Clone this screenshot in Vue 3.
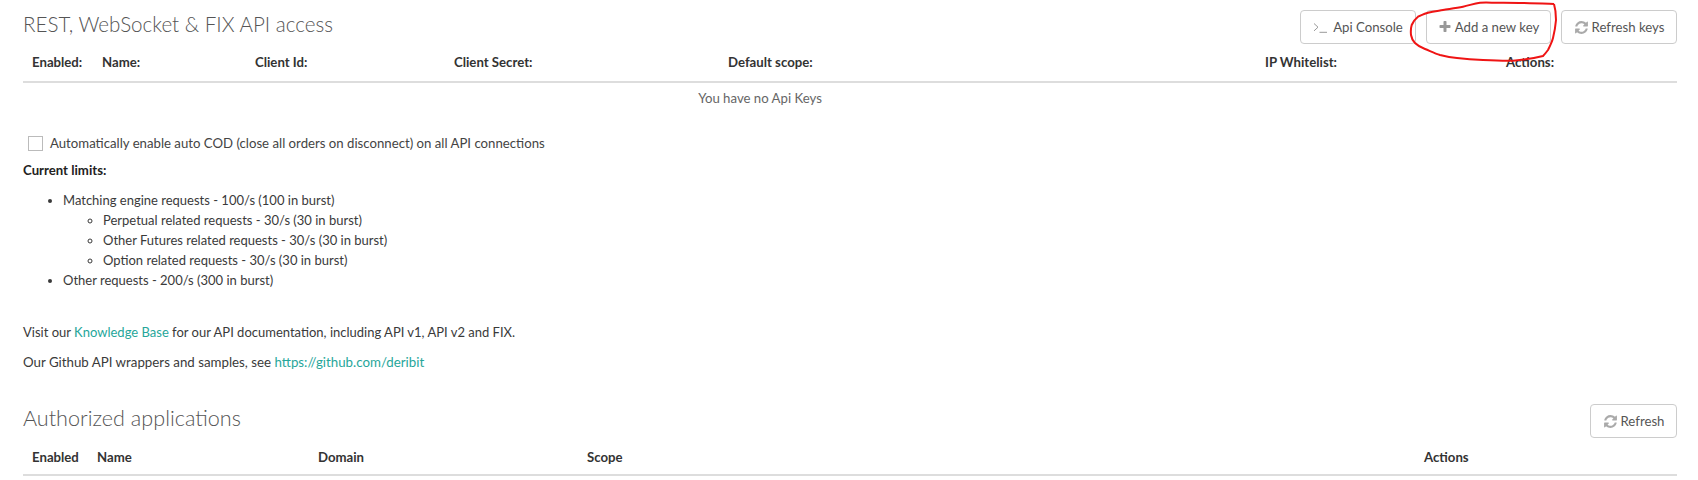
<template>
  <div class="page">
    <section class="api">
      <div class="head">
        <h2>REST, WebSocket &amp; FIX API access</h2>
        <div class="btns">
          <button class="btn w-console">
            <svg class="term" viewBox="0 0 14 10" width="14" height="10"><path d="M1 .5l4 3.7-4 3.7M6.5 9.3h7.5" fill="none" stroke="#999" stroke-width="1" /></svg>
            <span class="console-label">Api Console</span>
          </button>
          <button class="btn w-add">
            <svg viewBox="0 0 1792 1792" width="14" height="14"><path :d="plusPath" fill="#999" /></svg>
            Add a new key
          </button>
          <button class="btn w-refresh">
            <svg viewBox="0 0 1792 1792" width="15" height="15"><path :d="refreshPath" fill="#aaa" /></svg>
            Refresh keys
          </button>
        </div>
      </div>

      <table class="keys">
        <thead>
          <tr>
            <th v-for="c in keyCols" :key="c.name" :style="{ width: c.width + 'px' }">{{ c.name }}</th>
          </tr>
        </thead>
        <tbody>
          <tr>
            <td colspan="6" class="empty">You have no Api Keys</td>
            <td></td>
          </tr>
        </tbody>
      </table>

      <label class="auto">
        <span class="box"></span>
        Automatically enable auto COD (close all orders on disconnect) on all API connections
      </label>

      <p class="limits-title">Current limits:</p>
      <ul class="limits">
        <li>Matching engine requests - 100/s (100 in burst)
          <ul>
            <li v-for="l in subLimits" :key="l">{{ l }}</li>
          </ul>
        </li>
        <li>Other requests - 200/s (300 in burst)</li>
      </ul>

      <p class="note">Visit our <a href="#">Knowledge Base</a> for our API documentation, including API v1, API v2 and FIX.</p>
      <p class="note">Our Github API wrappers and samples, see <a href="#">https://github.com/deribit</a></p>
    </section>

    <section class="apps">
      <div class="head">
        <h2>Authorized applications</h2>
        <button class="btn w-short">
          <svg viewBox="0 0 1792 1792" width="15" height="15"><path :d="refreshPath" fill="#aaa" /></svg>
          Refresh
        </button>
      </div>
      <table class="keys">
        <thead>
          <tr>
            <th v-for="c in appCols" :key="c.name" :style="{ width: c.width + 'px' }">{{ c.name }}</th>
          </tr>
        </thead>
      </table>
    </section>

    <svg class="scribble" viewBox="0 0 170 70" width="170" height="70">
      <path d="M154 4C140 3.5 115 2.5 100 2.7C92 2.7 85 2.5 80 2.7C74 3.5 69 5.5 63 6.7C56 8 49 9 43 10C37 11 33 11.5 28 12.7C24 14 21 15 18 16.7C15 19 13 22 11.7 25C10.8 28 10.7 32 11 35C11.5 38 13 41 15 43C18 46 21 47.5 25 49C30 51 35 53.5 40 55C46 56.5 51 57.5 57 58C65 59 74 59.7 83 60C93 60.5 103 61 113 60.7C123 60 133 58.5 143 56C145 54 146.5 52 148 50C150 46 152 42 153 38C154.5 32 155.5 26 156 20C156 15 155.5 9 154 4" fill="none" stroke="#ef1414" stroke-width="2" />
    </svg>
  </div>
</template>

<script setup>
const plusPath = 'M1600 736v192q0 40-28 68t-68 28h-416v416q0 40-28 68t-68 28h-192q-40 0-68-28t-28-68v-416h-416q-40 0-68-28t-28-68v-192q0-40 28-68t68-28h416v-416q0-40 28-68t68-28h192q40 0 68 28t28 68v416h416q40 0 68 28t28 68z'
const refreshPath = 'M1639 1056q0 5-1 7-64 268-268 434.5t-478 166.5q-146 0-282.5-55t-243.5-157l-129 129q-19 19-45 19t-45-19-19-45v-448q0-26 19-45t45-19h448q26 0 45 19t19 45-19 45l-137 137q71 66 161 102t187 36q134 0 250-65t186-179q11-17 53-117 8-23 30-23h192q13 0 22.5 9.5t9.5 22.5zm25-800v448q0 26-19 45t-45 19h-448q-26 0-45-19t-19-45 19-45l138-138q-148-137-349-137-134 0-250 65t-186 179q-11 17-53 117-8 23-30 23h-199q-13 0-22.5-9.5t-9.5-22.5v-7q65-268 270-434.5t480-166.5q146 0 284 55.5t245 156.5l130-129q19-19 45-19t45 19 19 45z'

const keyCols = [
  { name: 'Enabled:', width: 70 },
  { name: 'Name:', width: 153 },
  { name: 'Client Id:', width: 199 },
  { name: 'Client Secret:', width: 274 },
  { name: 'Default scope:', width: 537 },
  { name: 'IP Whitelist:', width: 241 },
  { name: 'Actions:', width: 180 },
]
const appCols = [
  { name: 'Enabled', width: 65 },
  { name: 'Name', width: 221 },
  { name: 'Domain', width: 269 },
  { name: 'Scope', width: 837 },
  { name: 'Actions', width: 262 },
]
const subLimits = [
  'Perpetual related requests - 30/s (30 in burst)',
  'Other Futures related requests - 30/s (30 in burst)',
  'Option related requests - 30/s (30 in burst)',
]
</script>

<style scoped>
.page {
  position: relative;
  width: 1698px;
  height: 480px;
  overflow: hidden;
  padding: 10px 21px 0 23px;
  box-sizing: border-box;
  font-family: Lato, "Noto Sans", sans-serif;
  font-size: 13.2px;
  color: #3a3a3a;
  background: #fff;
}
.head {
  display: flex;
  justify-content: space-between;
  align-items: flex-start;
  height: 33px;
}
h2 {
  margin: 0;
  font-size: 20.6px;
  line-height: 28px;
  font-weight: 300;
  color: #555;
}
.apps h2 {
  font-size: 21.6px;
}
.btns {
  display: flex;
  gap: 10px;
}
.btn {
  display: flex;
  align-items: center;
  justify-content: center;
  gap: 3px;
  height: 34px;
  padding: 0;
  border: 1px solid #ccc;
  border-radius: 4px;
  background: #fff;
  font: inherit;
  color: #555;
}
.w-console {
  width: 116px;
}
.w-add {
  width: 125px;
}
.w-refresh {
  width: 116px;
}
.w-short {
  width: 87px;
}
.console-label {
  margin-left: 3px;
}
.term {
  margin-top: 2px;
}
.keys {
  width: 100%;
  table-layout: fixed;
  border-collapse: collapse;
  margin-top: 11px;
}
.keys th {
  box-sizing: border-box;
  padding: 0 0 11px 9px;
  text-align: left;
  font-weight: 700;
  color: #333;
  border-bottom: 2px solid #ddd;
}
.empty {
  padding: 5px 0 4px;
  height: 20px;
  text-align: center;
  color: #666;
}
.auto {
  display: flex;
  align-items: center;
  gap: 7px;
  margin: 21px 0 0 5px;
  height: 20px;
  color: #444;
}
.box {
  width: 13px;
  height: 13px;
  border: 1px solid #bbb;
}
.limits-title {
  margin: 7px 0 0;
  line-height: 20px;
  font-weight: 700;
  color: #222;
}
ul {
  margin: 0;
  padding-left: 40px;
  line-height: 20px;
  font-size: 13px;
}
.limits {
  margin-top: 10px;
}
.note {
  margin: 0 0 10px;
  line-height: 20px;
  font-size: 13px;
}
.note + .note {
  font-size: 13.3px;
}
.limits + .note {
  margin-top: 32px;
}
a {
  color: #26a69a;
  text-decoration: none;
}
.apps {
  margin-top: 32px;
}
.apps .keys {
  margin-top: 12px;
}
.apps .keys th {
  padding-bottom: 9px;
}
.scribble {
  position: absolute;
  left: 1400px;
  top: 0;
}
</style>
